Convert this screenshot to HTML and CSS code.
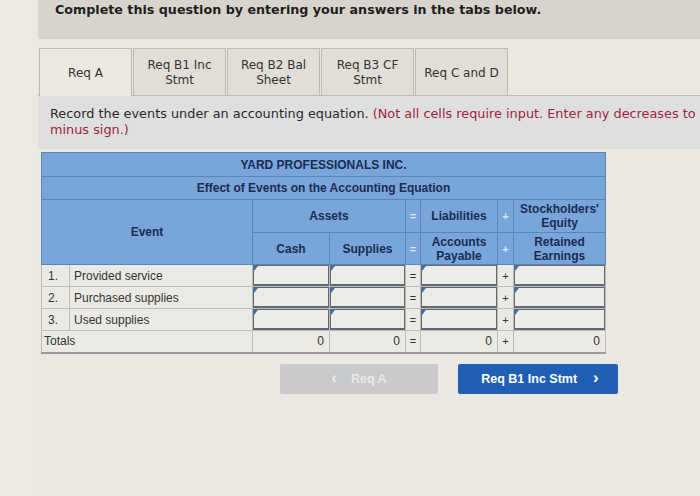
FILE: index.html
```html
<!DOCTYPE html>
<html>
<head>
<meta charset="utf-8">
<link rel="stylesheet" href="styles.css">
</head>
<body>
<div class="page">
  <div class="edge"></div>
  <div class="main">
    <div class="banner">Complete this question by entering your answers in the tabs below.</div>
    <div class="tabs">
      <div class="tab active">Req A</div>
      <div class="tab">Req B1 Inc<br>Stmt</div>
      <div class="tab">Req B2 Bal<br>Sheet</div>
      <div class="tab">Req B3 CF<br>Stmt</div>
      <div class="tab">Req C and D</div>
    </div>
    <div class="panel">
      <p class="instr">Record the events under an accounting equation. <span class="note">(Not all cells require input. Enter any decreases to<br>minus sign.)</span></p>
    </div>
    <div class="tablewrap">
      <table class="eq">
        <colgroup>
          <col class="c-num"><col class="c-ev"><col class="c-cash"><col class="c-sup"><col class="c-op"><col class="c-liab"><col class="c-op2"><col class="c-se">
        </colgroup>
        <tr class="h1"><th colspan="8">YARD PROFESSIONALS INC.</th></tr>
        <tr class="h2"><th colspan="8">Effect of Events on the Accounting Equation</th></tr>
        <tr class="h3">
          <th colspan="2" rowspan="2">Event</th>
          <th colspan="2">Assets</th>
          <th class="op">=</th>
          <th>Liabilities</th>
          <th class="op">+</th>
          <th>Stockholders'<br>Equity</th>
        </tr>
        <tr class="h4">
          <th>Cash</th>
          <th>Supplies</th>
          <th class="op">=</th>
          <th>Accounts<br>Payable</th>
          <th class="op">+</th>
          <th>Retained<br>Earnings</th>
        </tr>
        <tr class="row">
          <td class="num">1.</td><td class="ev">Provided service</td>
          <td class="in"><div class="box"></div></td><td class="in"><div class="box"></div></td>
          <td class="sym">=</td><td class="in"><div class="box"></div></td>
          <td class="sym">+</td><td class="in"><div class="box"></div></td>
        </tr>
        <tr class="row">
          <td class="num">2.</td><td class="ev">Purchased supplies</td>
          <td class="in"><div class="box"></div></td><td class="in"><div class="box"></div></td>
          <td class="sym">=</td><td class="in"><div class="box"></div></td>
          <td class="sym">+</td><td class="in"><div class="box"></div></td>
        </tr>
        <tr class="row">
          <td class="num">3.</td><td class="ev">Used supplies</td>
          <td class="in"><div class="box"></div></td><td class="in"><div class="box"></div></td>
          <td class="sym">=</td><td class="in"><div class="box"></div></td>
          <td class="sym">+</td><td class="in"><div class="box"></div></td>
        </tr>
        <tr class="row total">
          <td colspan="2" class="tl">Totals</td>
          <td class="val">0</td><td class="val">0</td>
          <td class="sym">=</td><td class="val">0</td>
          <td class="sym">+</td><td class="val">0</td>
        </tr>
      </table>
    </div>
    <div class="nav">
      <div class="btn prev"><span class="chev left">&lsaquo;</span>Req A</div>
      <div class="btn next">Req B1 Inc Stmt<span class="chev right">&rsaquo;</span></div>
    </div>
  </div>
</div>
</body>
</html>
```

FILE: styles.css
```css
* { box-sizing: border-box; }
html, body {
  margin: 0;
  padding: 0;
  width: 700px;
  height: 496px;
  overflow: hidden;
  background: #ebe8e1;
}
.page {
  display: flex;
  height: 496px;
}
.edge {
  width: 38px;
  flex: none;
  background: #ece9e3;
}
.main {
  flex: 1;
  min-width: 0;
  overflow: hidden;
}
.banner {
  height: 39px;
  background: #d7d4cd;
  padding: 2px 0 0 17px;
  font-family: "DejaVu Sans", Verdana, sans-serif;
  font-weight: bold;
  font-size: 12.7px;
  color: #1e1e1e;
  white-space: nowrap;
}
.tabs {
  display: flex;
  gap: 1px;
  margin-top: 9px;
  padding-left: 1px;
  height: 47px;
}
.tab {
  width: 93px;
  height: 47px;
  border: 1px solid #bdbab3;
  border-bottom: none;
  background: #e1ded7;
  display: flex;
  align-items: center;
  justify-content: center;
  text-align: center;
  font-family: "DejaVu Sans", Verdana, sans-serif;
  font-size: 12px;
  line-height: 15px;
  color: #333;
  padding-top: 2px;
}
.tab.active {
  background: #ebe8e1;
  height: 48px;
  position: relative;
  z-index: 1;
}
.panel {
  background: #dde0df;
  border-top: 1px solid #b9b9b6;
  height: 54px;
  padding: 10px 0 0 12px;
}
.instr {
  margin: 0;
  font-family: "DejaVu Sans", Verdana, sans-serif;
  font-size: 12.85px;
  line-height: 16px;
  color: #2a2a2a;
  white-space: nowrap;
}
.note { color: #a3233d; }
.tablewrap {
  margin: 3px 0 0 3px;
}
table.eq {
  border-collapse: collapse;
  table-layout: fixed;
  width: 564px;
  font-family: "Liberation Sans", Arial, sans-serif;
  font-size: 12px;
}
.c-num { width: 28px; }
.c-ev { width: 183px; }
.c-cash { width: 77px; }
.c-sup { width: 76px; }
.c-op { width: 15px; }
.c-liab { width: 77px; }
.c-op2 { width: 16px; }
.c-se { width: 92px; }
table.eq th {
  background: #78a6da;
  border: 1px solid #5d86b6;
  color: #1b2b52;
  font-weight: bold;
  padding: 0;
  line-height: 14px;
  text-align: center;
}
tr.h1 th { height: 24px; }
tr.h2 th { height: 23px; }
tr.h3 th { height: 33px; }
tr.h4 th { height: 32px; }
table.eq th.op { font-size: 11px; color: #dfe8f4; }
tr.row td {
  height: 22px;
  padding: 0;
  border: 1px solid #bcbcbc;
  background: #ebe9e4;
  color: #333;
}
td.num { padding-left: 6px !important; }
td.ev { padding-left: 4px !important; }
td.tl { padding-left: 2px !important; }
td.sym {
  text-align: center;
  color: #a0a0a0;
  font-size: 11px;
}
td.in { vertical-align: top; }
.box {
  position: relative;
  height: 21px;
  border-style: solid;
  border-color: #5e6975;
  border-width: 1px 1px 2px 1px;
  background: #eeece7;
}
.box::before {
  content: "";
  position: absolute;
  left: 0;
  top: 0;
  border-top: 5px solid #3f6fb3;
  border-right: 4px solid transparent;
}
td.val {
  text-align: right;
  padding-right: 5px !important;
}
tr.total td { border-bottom: 2px solid #9a9a9a; }
.nav {
  display: flex;
  gap: 20px;
  margin: 10px 0 0 242px;
}
.btn {
  height: 30px;
  display: flex;
  align-items: center;
  justify-content: center;
  font-family: "Liberation Sans", Arial, sans-serif;
  font-weight: bold;
  font-size: 12.5px;
  border-radius: 2px;
}
.btn.prev {
  width: 158px;
  background: #c9cacb;
  color: #e9e9e9;
}
.btn.next {
  width: 160px;
  background: #1f5fb4;
  color: #fff;
  padding-left: 4px;
}
.chev {
  font-size: 17px;
  position: relative;
  top: -1px;
}
.chev.left { margin-right: 14px; }
.chev.right { margin-left: 16px; }
```
